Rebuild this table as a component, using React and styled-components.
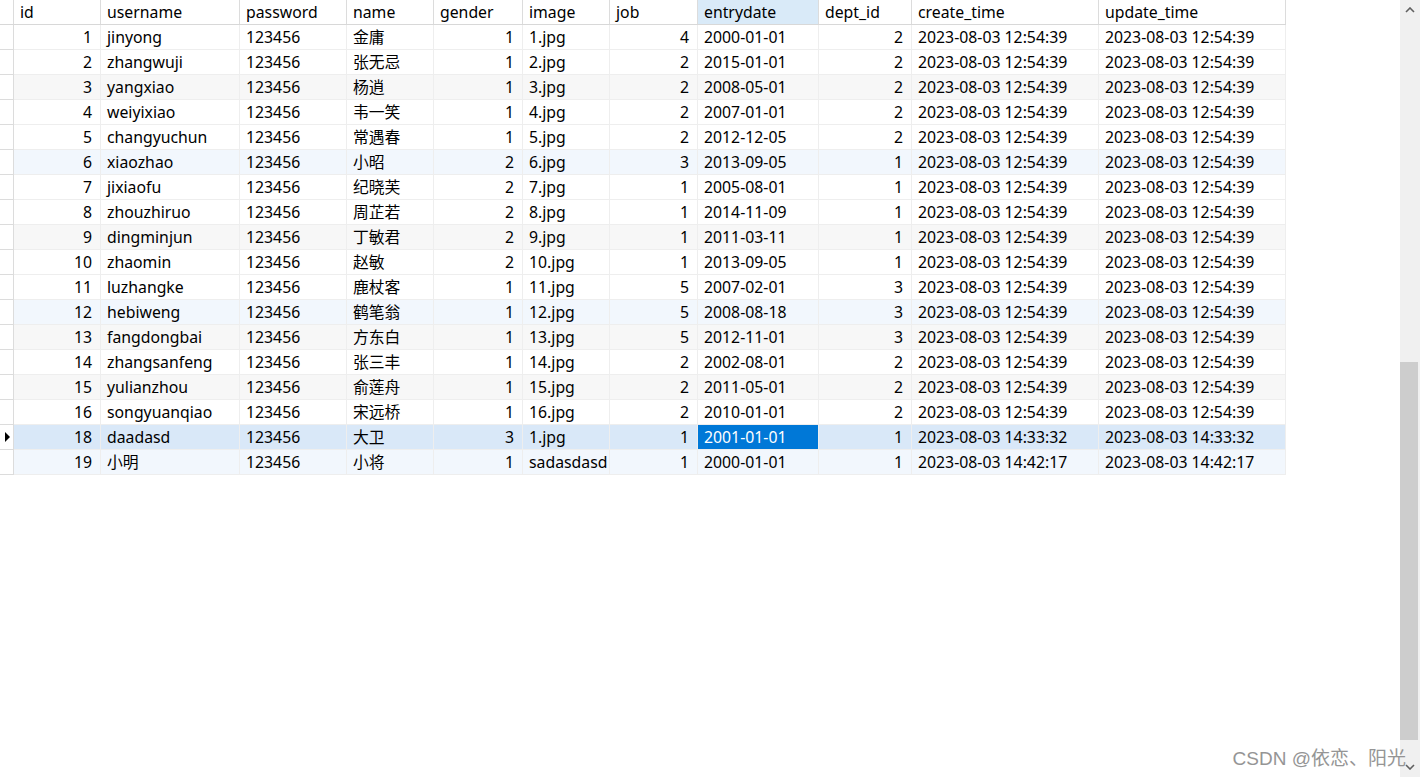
import React from "react"
import styled, { createGlobalStyle } from "styled-components"

const GlobalStyle = createGlobalStyle`
  html, body {
    margin: 0;
    padding: 0;
    background: #ffffff;
  }
  body {
    font-family: "Noto Sans", "Noto Sans CJK SC", sans-serif;
    font-size: 15.8px;
    color: #000;
    overflow: hidden;
  }
`

const columns = [
  { key: "id", width: 87, num: true },
  { key: "username", width: 139 },
  { key: "password", width: 107 },
  { key: "name", width: 87 },
  { key: "gender", width: 89, num: true },
  { key: "image", width: 87 },
  { key: "job", width: 88, num: true },
  { key: "entrydate", width: 121 },
  { key: "dept_id", width: 93, num: true },
  { key: "create_time", width: 187 },
  { key: "update_time", width: 187 },
]

const template = "14px " + columns.map((c) => c.width + "px").join(" ")

const T1 = "2023-08-03 12:54:39"

const rows = [
  [1, "jinyong", "123456", "金庸", 1, "1.jpg", 4, "2000-01-01", 2, T1, T1],
  [2, "zhangwuji", "123456", "张无忌", 1, "2.jpg", 2, "2015-01-01", 2, T1, T1],
  [3, "yangxiao", "123456", "杨逍", 1, "3.jpg", 2, "2008-05-01", 2, T1, T1],
  [4, "weiyixiao", "123456", "韦一笑", 1, "4.jpg", 2, "2007-01-01", 2, T1, T1],
  [5, "changyuchun", "123456", "常遇春", 1, "5.jpg", 2, "2012-12-05", 2, T1, T1],
  [6, "xiaozhao", "123456", "小昭", 2, "6.jpg", 3, "2013-09-05", 1, T1, T1],
  [7, "jixiaofu", "123456", "纪晓芙", 2, "7.jpg", 1, "2005-08-01", 1, T1, T1],
  [8, "zhouzhiruo", "123456", "周芷若", 2, "8.jpg", 1, "2014-11-09", 1, T1, T1],
  [9, "dingminjun", "123456", "丁敏君", 2, "9.jpg", 1, "2011-03-11", 1, T1, T1],
  [10, "zhaomin", "123456", "赵敏", 2, "10.jpg", 1, "2013-09-05", 1, T1, T1],
  [11, "luzhangke", "123456", "鹿杖客", 1, "11.jpg", 5, "2007-02-01", 3, T1, T1],
  [12, "hebiweng", "123456", "鹤笔翁", 1, "12.jpg", 5, "2008-08-18", 3, T1, T1],
  [13, "fangdongbai", "123456", "方东白", 1, "13.jpg", 5, "2012-11-01", 3, T1, T1],
  [14, "zhangsanfeng", "123456", "张三丰", 1, "14.jpg", 2, "2002-08-01", 2, T1, T1],
  [15, "yulianzhou", "123456", "俞莲舟", 1, "15.jpg", 2, "2011-05-01", 2, T1, T1],
  [16, "songyuanqiao", "123456", "宋远桥", 1, "16.jpg", 2, "2010-01-01", 2, T1, T1],
  [18, "daadasd", "123456", "大卫", 3, "1.jpg", 1, "2001-01-01", 1, "2023-08-03 14:33:32", "2023-08-03 14:33:32"],
  [19, "小明", "123456", "小将", 1, "sadasdasd", 1, "2000-01-01", 1, "2023-08-03 14:42:17", "2023-08-03 14:42:17"],
]

const tones = {
  white: "#ffffff",
  stripe: "#f7f7f7",
  hover: "#f2f7fd",
  selected: "#d9e8f8",
}

// stripes as they show in the capture (not a strict alternation)
const striped = [3, 9, 13, 15]

function rowTone(id) {
  if (id === 18) return "selected"
  if (id === 6 || id === 12 || id === 19) return "hover"
  return striped.includes(id) ? "stripe" : "white"
}

export default function App() {
  return (
    <>
      <GlobalStyle />
      <Screen>
        <GridArea>
          <HeaderRow>
            <Corner />
            {columns.map((c) => (
              <HeadCell key={c.key} $active={c.key === "entrydate"}>
                {c.key}
              </HeadCell>
            ))}
          </HeaderRow>
          {rows.map((r) => {
            const tone = rowTone(r[0])
            return (
              <Row key={r[0]} $bg={tones[tone]}>
                <Marker>{tone === "selected" && <Arrow />}</Marker>
                {columns.map((c, j) => {
                  const focus = tone === "selected" && c.key === "entrydate"
                  return (
                    <Cell key={c.key} $num={c.num} $focus={focus}>
                      {r[j]}
                    </Cell>
                  )
                })}
              </Row>
            )
          })}
        </GridArea>
        <Scrollbar>
          <ScrollArrow>
            <svg width="10" height="6" viewBox="0 0 10 6">
              <path d="M1 5 L5 1 L9 5" fill="none" stroke="#606060" strokeWidth="1.6" />
            </svg>
          </ScrollArrow>
          <Track>
            <Thumb />
          </Track>
          <ScrollArrow>
            <svg width="10" height="6" viewBox="0 0 10 6">
              <path d="M1 1 L5 5 L9 1" fill="none" stroke="#606060" strokeWidth="1.6" />
            </svg>
          </ScrollArrow>
        </Scrollbar>
        <Watermark>CSDN @依恋、阳光</Watermark>
      </Screen>
    </>
  )
}

const Screen = styled.div`
  position: relative;
  display: flex;
  width: 1420px;
  height: 777px;
  overflow: hidden;
`

const GridArea = styled.div`
  flex: 1;
  display: flex;
  flex-direction: column;
`

const HeaderRow = styled.div`
  display: grid;
  grid-template-columns: ${template};
  height: 25px;
  width: max-content;
  border-bottom: 1px solid #d8d8d8;
  box-sizing: border-box;
`

const Corner = styled.div`
  border-right: 1px solid #dcdcdc;
`

const HeadCell = styled.div`
  display: flex;
  align-items: center;
  padding: 2px 6px 0;
  border-right: 1px solid #dcdcdc;
  background: ${(p) => (p.$active ? "#d9eaf8" : "#ffffff")};
  white-space: nowrap;
  line-height: 1;
`

const Row = styled.div`
  display: grid;
  grid-template-columns: ${template};
  height: 25px;
  width: max-content;
  background: ${(p) => p.$bg};
`

const Marker = styled.div`
  position: relative;
  border-right: 1px solid #dcdcdc;
  border-bottom: 1px solid #dcdcdc;
  background: #ffffff;
`

const Arrow = styled.div`
  position: absolute;
  left: 5px;
  top: 7px;
  width: 0;
  height: 0;
  border-top: 5px solid transparent;
  border-bottom: 5px solid transparent;
  border-left: 5px solid #000;
`

const Cell = styled.div`
  display: flex;
  align-items: center;
  justify-content: ${(p) => (p.$num ? "flex-end" : "flex-start")};
  padding: 2px 8px 0 6px;
  border-right: 1px solid #eeeeee;
  border-bottom: 1px solid #eeeeee;
  background: ${(p) => (p.$focus ? "#0078d7" : "transparent")};
  color: ${(p) => (p.$focus ? "#ffffff" : "#000000")};
  white-space: nowrap;
  overflow: hidden;
  line-height: 1;
`

const Scrollbar = styled.div`
  width: 20px;
  display: flex;
  flex-direction: column;
  background: #f0f0f0;
`

const ScrollArrow = styled.div`
  height: 20px;
  display: flex;
  align-items: center;
  justify-content: center;
`

const Track = styled.div`
  flex: 1;
  display: flex;
  flex-direction: column;
  justify-content: flex-end;
  padding: 0 2px 17px 0;
`

const Thumb = styled.div`
  height: 378px;
  background: #cdcdcd;
`

const Watermark = styled.div`
  position: absolute;
  right: 14px;
  bottom: 7px;
  font-family: "Liberation Sans", "Noto Sans CJK SC", sans-serif;
  font-size: 19px;
  color: #8a8a8a;
  opacity: 0.9;
`
